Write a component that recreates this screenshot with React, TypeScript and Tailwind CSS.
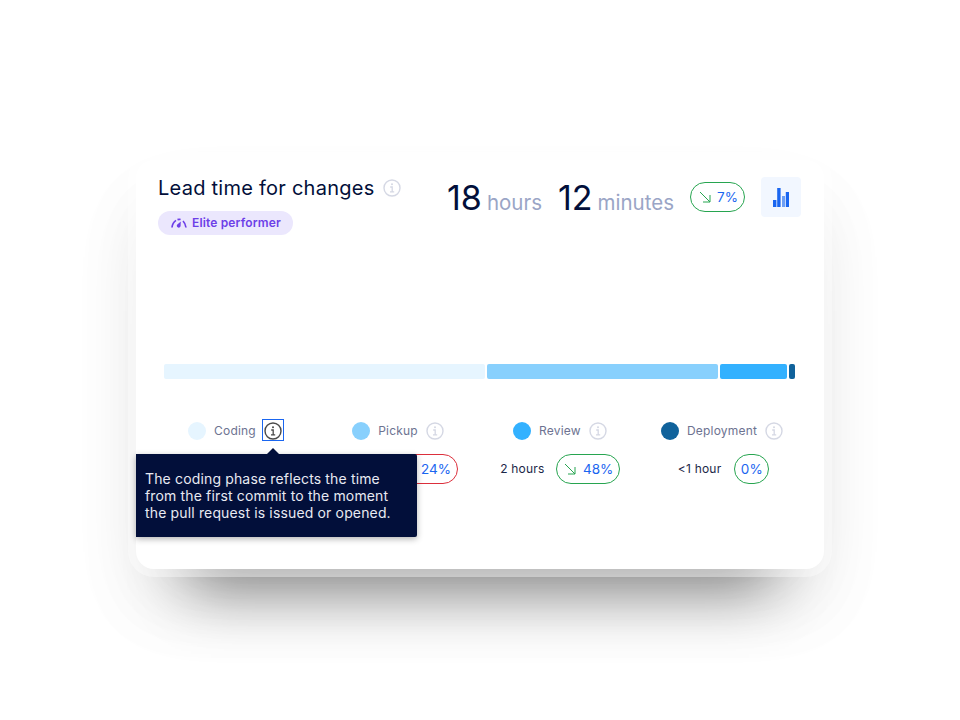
// the tooltip covers the coding row and most of the pickup row
const PHASES = [
  { name: 'Coding', dot: 'bg-[#e6f5ff]', time: '', pct: '', trend: '', active: true },
  { name: 'Pickup', dot: 'bg-[#88d0fd]', time: '', pct: '24%', trend: 'up', active: false },
  { name: 'Review', dot: 'bg-[#33b1ff]', time: '2 hours', pct: '48%', trend: 'down', active: false },
  { name: 'Deployment', dot: 'bg-[#10629b]', time: '<1 hour', pct: '0%', trend: 'flat', active: false },
];

function InfoIcon({ size = 18, className = '' }: { size?: number; className?: string }) {
  return (
    <svg width={size} height={size} viewBox="0 0 18 18" fill="none" stroke="currentColor" className={className}>
      <circle cx="9" cy="9" r="8" strokeWidth="1.4" />
      <path d="M7.2 8H9.2V12.8M7 12.8H11.2" strokeWidth="1.3" />
      <circle cx="9" cy="5.3" r="1" fill="currentColor" stroke="none" />
    </svg>
  );
}

function Gauge() {
  return (
    <svg width="16" height="10" viewBox="0 0 16 10" fill="none" className="text-[#6d3fe8]">
      <path d="M1 9.5C1.3 6.5 2.6 4 5 2.4" stroke="currentColor" strokeWidth="1.7" />
      <path d="M6.5 1.6C7.6 1.2 8.6 1.2 9.6 1.5" stroke="currentColor" strokeWidth="1.7" />
      <path d="M12 3C13.6 4.5 14.6 6.8 15 9.5" stroke="currentColor" strokeWidth="1.7" />
      <path d="M9.8 3.4L9.6 7.6A1.9 1.9 0 1 1 6.3 6.5Z" fill="currentColor" />
    </svg>
  );
}

function TrendArrow({ up = false }: { up?: boolean }) {
  return (
    <svg width="12" height="12" viewBox="0 0 12 12" fill="none" stroke={up ? '#dc2f3c' : '#27a550'} strokeWidth="1">
      {up ? <path d="M1 11L11 1M4 1H11V8" /> : <path d="M1 1L11 11M11 4V11H4" />}
    </svg>
  );
}

function Pill({ pct, trend }: { pct: string; trend: string }) {
  return (
    <div
      className={`h-[30px] rounded-full border bg-white flex items-center gap-[7px] text-[13.5px] text-[#1a66f0] ${
        trend === 'up' ? 'border-[#dc2f3c]' : 'border-[#27a550]'
      } ${trend === 'flat' ? 'px-[5.5px]' : 'pl-[7.5px] pr-[5.5px]'}`}
    >
      {trend === 'down' && <TrendArrow />}
      {trend === 'up' && <TrendArrow up />}
      <span>{pct}</span>
    </div>
  );
}

export default function App() {
  return (
    <div className="w-[960px] h-[720px] overflow-hidden bg-white pt-[160px] pl-[136px] font-['Inter',sans-serif]">
      <div className="relative w-[688px] h-[409px] rounded-[18px] bg-white shadow-[0_0_0_8px_rgba(255,255,255,0.38),0_76px_56px_-55px_rgba(0,0,0,0.42),0_40px_80px_-10px_rgba(0,0,0,0.08),0_40px_70px_rgba(0,0,0,0.05)]">
        <div className="flex justify-between pl-[22px] pr-[23px] pt-[16px]">
          <div>
            <div className="flex items-center gap-[9px]">
              <h2 className="text-[20px] leading-[24px] tracking-[0.25px] text-[#020f3a]">Lead time for changes</h2>
              <InfoIcon className="text-[#d5d8e4]" />
            </div>
            <div className="mt-[11px] w-[135px] h-[24px] rounded-full bg-[#ebe7fd] flex items-center gap-[5px] pl-[13px]">
              <Gauge />
              <span className="text-[12px] font-semibold tracking-[0.15px] text-[#6d3fe8]">Elite performer</span>
            </div>
          </div>
          <div className="flex items-start mt-[1px]">
            <div className="flex items-baseline gap-[5px] mt-[-1px] mr-[16px] text-[#020f3a]">
              <span className="text-[34px] leading-[44px]">18</span>
              <span className="text-[20.5px] text-[#9aa5c6] mr-[11px]">hours</span>
              <span className="text-[34px] leading-[44px]">12</span>
              <span className="text-[20.5px] text-[#9aa5c6]">minutes</span>
            </div>
            <div className="mt-[5px] h-[30px] w-[55px] rounded-full border border-[#27a550] flex items-center gap-[6px] pl-[8px] text-[13.5px] text-[#1a66f0]">
              <TrendArrow />
              <span>7%</span>
            </div>
            <div className="ml-[16px] w-[40px] h-[40px] rounded-[4px] bg-[#f2f7ff] flex items-center justify-center">
              <svg width="16" height="19" viewBox="0 0 16 19">
                <rect x="0" y="12" width="3.4" height="7" fill="#1a66f0" />
                <rect x="4.2" y="0" width="3.4" height="19" fill="#1a66f0" />
                <rect x="9" y="8" width="3" height="11" fill="#6d9ff5" />
                <rect x="12.8" y="4" width="3.2" height="15" fill="#1a66f0" />
              </svg>
            </div>
          </div>
        </div>

        <div className="flex gap-[2px] mt-[129px] ml-[28px] w-[631px] h-[15px]">
          <div className="w-[321px] rounded-[2px] bg-[#e6f5ff]" />
          <div className="w-[231px] rounded-[2px] bg-[#88d0fd]" />
          <div className="w-[67px] rounded-[2px] bg-[#33b1ff]" />
          <div className="w-[6px] rounded-[2px] bg-[#10629b]" />
        </div>

        <div className="grid grid-cols-4 ml-[19px] w-[648px] mt-[40px]">
          {PHASES.map((p) => (
            <div key={p.name} className="flex flex-col items-center gap-[13px]">
              <div className="h-[22px] flex items-center">
                <span className={`mt-[1px] w-[18px] h-[18px] rounded-full ${p.dot}`} />
                <span className={`mt-[1px] ml-[8px] text-[12px] tracking-[0.2px] text-[#6d7391] ${p.active ? 'mr-[6px]' : 'mr-[8px]'}`}>{p.name}</span>
                {p.active ? (
                  <span className="w-[22px] h-[22px] border border-[#1a66f0] flex items-center justify-center">
                    <InfoIcon className="mt-[1px] text-[#4a4a4a]" />
                  </span>
                ) : (
                  <InfoIcon className="mt-[1px] text-[#d5d8e4]" />
                )}
              </div>
              {p.pct && (
                <div className={`flex items-center ${p.trend === 'flat' ? 'gap-[13px] ml-[3px]' : 'gap-[11px]'}`}>
                  {p.time ? (
                    <span className="text-[12px] tracking-[0.2px] text-[#1c2748]">{p.time}</span>
                  ) : (
                    <span className="w-[44px]" />
                  )}
                  <Pill pct={p.pct} trend={p.trend} />
                </div>
              )}
            </div>
          ))}
        </div>

        <div className="absolute left-0 top-[294px] w-[281px] h-[83px] rounded-r-[2px] bg-[#020f3a] px-[9px] pt-[16px] text-[14px] leading-[17px] tracking-[0.15px] text-[#e8eaf2] shadow-[0_2px_6px_rgba(0,0,0,0.3)]">
          <span className="absolute left-[131px] top-[-6px] w-0 h-0 border-x-[6px] border-x-transparent border-b-[6px] border-b-[#020f3a]" />
          The coding phase reflects the time from the first commit to the moment the pull request is issued or opened.
        </div>
      </div>
    </div>
  );
}
